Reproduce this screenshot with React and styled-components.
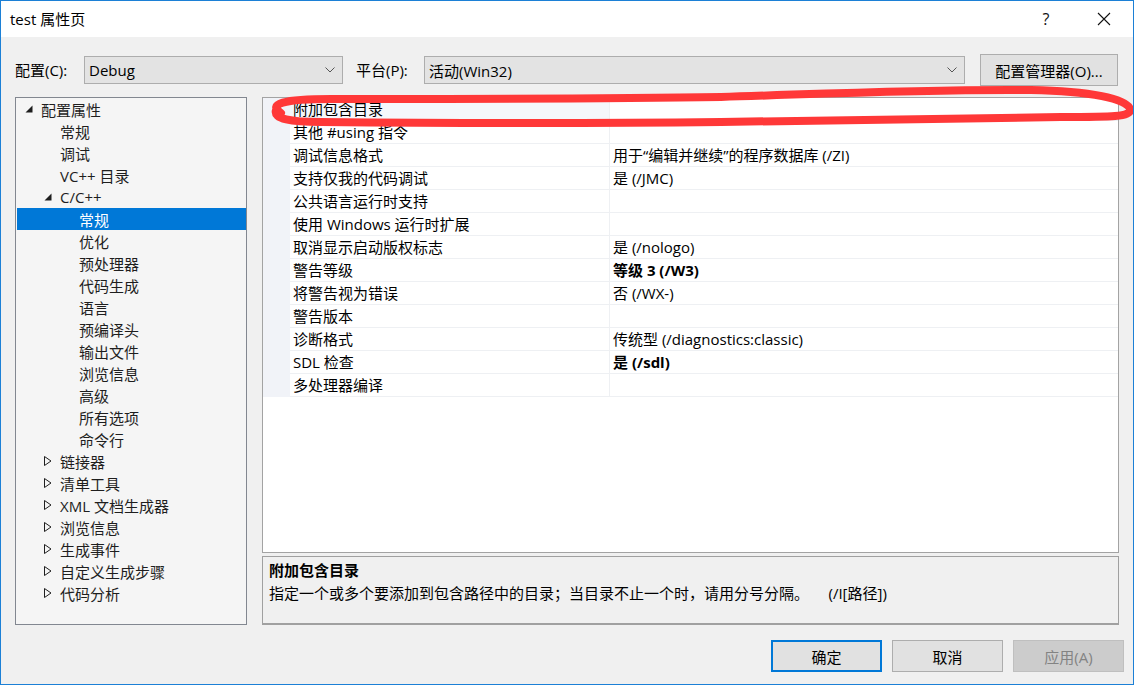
import React from "react";
import styled, { createGlobalStyle } from "styled-components";

const GlobalStyle = createGlobalStyle`
  html, body {
    margin: 0;
    padding: 0;
    background: #ffffff;
  }
`;

const Window = styled.div`
  position: relative;
  width: 1134px;
  height: 685px;
  box-sizing: border-box;
  border: 1px solid #1c80d6;
  background: #f0f0f0;
  display: flex;
  flex-direction: column;
  font-family: "Open Sans", "Noto Sans CJK SC", sans-serif;
  font-size: 15px;
  color: #000;
  overflow: hidden;
`;

const TitleBar = styled.div`
  height: 36px;
  background: #ffffff;
  display: flex;
  align-items: center;
  padding-left: 9px;
`;

const TitleText = styled.div`
  flex: 1;
  line-height: 20px;
  padding-bottom: 1px;
`;

const TitleButton = styled.div`
  width: 58px;
  height: 36px;
  display: flex;
  align-items: center;
  justify-content: center;
  font-size: 16px;
  color: #111;
`;

const Body = styled.div`
  flex: 1;
  display: flex;
  flex-direction: column;
  padding: 17px 14px 0 14px;
`;

const ConfigRow = styled.div`
  height: 32px;
  display: flex;
  align-items: center;
`;

const Label = styled.div`
  width: ${p => p.width}px;
  flex: none;
  line-height: 20px;
`;

const Combo = styled.div`
  width: ${p => p.width}px;
  height: 28px;
  box-sizing: border-box;
  border: 1px solid #adadad;
  background: #e3e3e3;
  display: flex;
  align-items: center;
  justify-content: space-between;
  padding: 0 7px 0 4px;
  margin-right: ${p => p.gap}px;
  flex: none;
`;

const PushButton = styled.div`
  width: ${p => p.width || 111}px;
  height: 32px;
  box-sizing: border-box;
  border: ${p => (p.primary ? "2px solid #0078d7" : p.disabled ? "1px solid #bfbfbf" : "1px solid #adadad")};
  background: ${p => (p.disabled ? "#cccccc" : "#e1e1e1")};
  color: ${p => (p.disabled ? "#838383" : "#000")};
  display: flex;
  align-items: center;
  justify-content: center;
  flex: none;
`;

const Main = styled.div`
  display: flex;
  gap: 15px;
  margin-top: 11px;
  height: 528px;
`;

const TreePanel = styled.div`
  width: 232px;
  box-sizing: border-box;
  border: 1px solid #828790;
  background: #f5f5f5;
`;

const TreeRow = styled.div`
  height: 22px;
  display: flex;
  align-items: center;
  margin-left: 1px;
  padding-left: ${p => 8 + p.level * 19}px;
  background: ${p => (p.selected ? "#0078d7" : "transparent")};
  color: ${p => (p.selected ? "#fff" : "#1e1e1e")};
`;

const Toggle = styled.div`
  width: 16px;
  height: 22px;
  flex: none;
  display: flex;
  align-items: center;
`;

const RightColumn = styled.div`
  flex: 1;
  display: flex;
  flex-direction: column;
  gap: 3px;
`;

const GridPanel = styled.div`
  height: 456px;
  box-sizing: border-box;
  border: 1px solid #a3a3a3;
  background: #ffffff;
`;

const GridRow = styled.div`
  display: grid;
  grid-template-columns: 27px 319px 1fr;
  height: 23px;
`;

const Stripe = styled.div`
  background: #f1f3f8;
`;

const NameCell = styled.div`
  padding-left: 3px;
  line-height: 22px;
  border-bottom: 1px solid #eef0f3;
  background: ${p => (p.active ? "#f5f7fb" : "#fff")};
  white-space: nowrap;
`;

const ValueCell = styled.div`
  padding-left: 3px;
  line-height: 22px;
  border-bottom: 1px solid #eef0f3;
  border-left: 1px solid #eef0f3;
  font-weight: ${p => (p.bold ? 700 : 400)};
  white-space: nowrap;
`;

const DescPanel = styled.div`
  flex: 1;
  box-sizing: border-box;
  border: 1px solid #a0a0a0;
  border-bottom-width: 2px;
  padding: 2px 6px 0 6px;
  line-height: 23px;
`;

const DescTitle = styled.div`
  font-weight: 700;
`;

const DescText = styled.div`
  white-space: pre;
`;

const Footer = styled.div`
  display: flex;
  justify-content: flex-end;
  gap: 10px;
  margin: 15px -5px 0 0;
`;

const Annotation = styled.svg`
  position: absolute;
  left: 0;
  top: 0;
  pointer-events: none;
`;

const Chevron = () => (
  <svg width="10" height="6" viewBox="0 0 10 6">
    <polyline points="0.5,0.5 5,5 9.5,0.5" fill="none" stroke="#555" strokeWidth="1" />
  </svg>
);

const CloseIcon = () => (
  <svg width="14" height="14" viewBox="0 0 14 14">
    <path d="M1 1 L13 13 M13 1 L1 13" stroke="#111" strokeWidth="1.1" />
  </svg>
);

const Expanded = () => (
  <svg width="8" height="8" viewBox="0 0 8 8">
    <polygon points="7.5,0.5 7.5,7.5 0.5,7.5" fill="#1e1e1e" />
  </svg>
);

const Collapsed = () => (
  <svg width="8" height="10" viewBox="0 0 8 10">
    <polygon points="0.5,0.5 7,5 0.5,9.5" fill="none" stroke="#1e1e1e" strokeWidth="1" />
  </svg>
);

const tree = [
  { label: "配置属性", level: 0, toggle: "open" },
  { label: "常规", level: 1 },
  { label: "调试", level: 1 },
  { label: "VC++ 目录", level: 1 },
  { label: "C/C++", level: 1, toggle: "open" },
  { label: "常规", level: 2, selected: true },
  { label: "优化", level: 2 },
  { label: "预处理器", level: 2 },
  { label: "代码生成", level: 2 },
  { label: "语言", level: 2 },
  { label: "预编译头", level: 2 },
  { label: "输出文件", level: 2 },
  { label: "浏览信息", level: 2 },
  { label: "高级", level: 2 },
  { label: "所有选项", level: 2 },
  { label: "命令行", level: 2 },
  { label: "链接器", level: 1, toggle: "closed" },
  { label: "清单工具", level: 1, toggle: "closed" },
  { label: "XML 文档生成器", level: 1, toggle: "closed" },
  { label: "浏览信息", level: 1, toggle: "closed" },
  { label: "生成事件", level: 1, toggle: "closed" },
  { label: "自定义生成步骤", level: 1, toggle: "closed" },
  { label: "代码分析", level: 1, toggle: "closed" }
];

const props = [
  ["附加包含目录", ""],
  ["其他 #using 指令", ""],
  ["调试信息格式", "用于“编辑并继续”的程序数据库 (/ZI)"],
  ["支持仅我的代码调试", "是 (/JMC)"],
  ["公共语言运行时支持", ""],
  ["使用 Windows 运行时扩展", ""],
  ["取消显示启动版权标志", "是 (/nologo)"],
  ["警告等级", "等级 3 (/W3)", true],
  ["将警告视为错误", "否 (/WX-)"],
  ["警告版本", ""],
  ["诊断格式", "传统型 (/diagnostics:classic)"],
  ["SDL 检查", "是 (/sdl)", true],
  ["多处理器编译", ""]
];

export default function App() {
  return (
    <>
      <GlobalStyle />
      <Window>
        <TitleBar>
          <TitleText>test 属性页</TitleText>
          <TitleButton>?</TitleButton>
          <TitleButton>
            <CloseIcon />
          </TitleButton>
        </TitleBar>
        <Body>
          <ConfigRow>
            <Label width={69}>配置(C):</Label>
            <Combo width={259} gap={13}>
              <span>Debug</span>
              <Chevron />
            </Combo>
            <Label width={68}>平台(P):</Label>
            <Combo width={541} gap={15}>
              <span>活动(Win32)</span>
              <Chevron />
            </Combo>
            <PushButton width={138}>配置管理器(O)...</PushButton>
          </ConfigRow>
          <Main>
            <TreePanel>
              {tree.map((item, i) => (
                <TreeRow key={i} level={item.level} selected={item.selected}>
                  <Toggle>
                    {item.toggle === "open" && <Expanded />}
                    {item.toggle === "closed" && <Collapsed />}
                  </Toggle>
                  {item.label}
                </TreeRow>
              ))}
            </TreePanel>
            <RightColumn>
              <GridPanel>
                {props.map(([name, value, bold], i) => (
                  <GridRow key={i}>
                    <Stripe />
                    <NameCell active={i === 0}>{name}</NameCell>
                    <ValueCell bold={bold}>{value}</ValueCell>
                  </GridRow>
                ))}
              </GridPanel>
              <DescPanel>
                <DescTitle>附加包含目录</DescTitle>
                <DescText>
                  {"指定一个或多个要添加到包含路径中的目录；当目录不止一个时，请用分号分隔。     (/I[路径])"}
                </DescText>
              </DescPanel>
            </RightColumn>
          </Main>
          <Footer>
            <PushButton primary>确定</PushButton>
            <PushButton>取消</PushButton>
            <PushButton disabled>应用(A)</PushButton>
          </Footer>
        </Body>
        <Annotation width="1134" height="685" viewBox="0 0 1134 685">
          <path
            d="M280 112 C266 103 282 98 330 98 C450 98 600 98 720 96 C820 93 920 88 1030 89 C1090 90 1126 98 1129 108 C1131 116 1110 116 1060 116 C960 117 850 119 720 121 C560 123 420 122 320 121 C290 121 272 118 275 109"
            fill="none"
            stroke="#ff3838"
            strokeWidth="8"
            strokeLinecap="round"
            strokeLinejoin="round"
          />
        </Annotation>
      </Window>
    </>
  );
}
